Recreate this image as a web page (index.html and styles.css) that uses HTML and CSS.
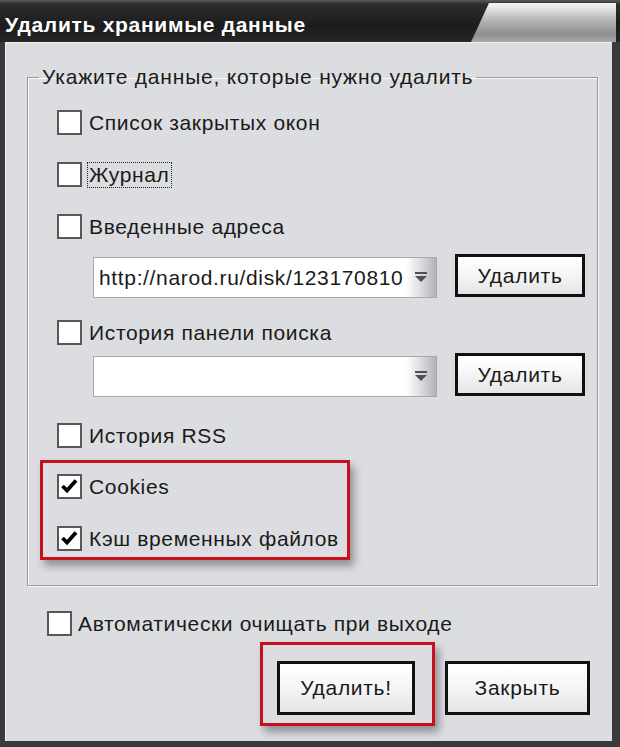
FILE: index.html
```html
<!DOCTYPE html>
<html lang="ru">
<head>
    <meta charset="UTF-8">
    <title>Удалить хранимые данные</title>
    <link rel="stylesheet" href="styles.css">
</head>
<body>
    <div class="window">
        <!-- Title bar -->
        <div class="titlebar">
            <span class="title">Удалить хранимые данные</span>
            <div class="tab"></div>
        </div>

        <div class="client">
            <fieldset class="group">
                <legend>Укажите данные, которые нужно удалить</legend>

                <div class="check"><span class="box"></span><span>Список закрытых окон</span></div>
                <div class="check"><span class="box"></span><span class="focus">Журнал</span></div>
                <div class="check"><span class="box"></span><span>Введенные адреса</span></div>
                <div class="combo-row">
                    <div class="combo">
                        <span class="combo-text">http://narod.ru/disk/123170810</span>
                        <span class="combo-btn">
                            <svg width="12" height="11" viewBox="0 0 12 11"><rect x="0" y="0" width="12" height="2" fill="#505050"/><path d="M0 4 H12 L6 10 Z" fill="#505050"/></svg>
                        </span>
                    </div>
                    <button class="btn">Удалить</button>
                </div>

                <div class="check"><span class="box"></span><span>История панели поиска</span></div>
                <div class="combo-row">
                    <div class="combo">
                        <span class="combo-text"></span>
                        <span class="combo-btn">
                            <svg width="12" height="11" viewBox="0 0 12 11"><rect x="0" y="0" width="12" height="2" fill="#505050"/><path d="M0 4 H12 L6 10 Z" fill="#505050"/></svg>
                        </span>
                    </div>
                    <button class="btn">Удалить</button>
                </div>

                <div class="check"><span class="box"></span><span>История RSS</span></div>

                <div class="mark mark-list">
                    <div class="check">
                        <span class="box"><svg width="21" height="21" viewBox="0 0 21 21"><path d="M3.5 10 L8 14.5 L17 4.5" fill="none" stroke="#000" stroke-width="3.8"/></svg></span>
                        <span>Cookies</span>
                    </div>
                    <div class="check">
                        <span class="box"><svg width="21" height="21" viewBox="0 0 21 21"><path d="M3.5 10 L8 14.5 L17 4.5" fill="none" stroke="#000" stroke-width="3.8"/></svg></span>
                        <span>Кэш временных файлов</span>
                    </div>
                </div>
            </fieldset>

            <div class="check auto"><span class="box"></span><span>Автоматически очищать при выходе</span></div>

            <div class="actions">
                <div class="mark mark-btn">
                    <button class="btn btn-big">Удалить!</button>
                </div>
                <button class="btn btn-big btn-close">Закрыть</button>
            </div>
        </div>
    </div>
</body>
</html>
```

FILE: styles.css
```css
* {
    margin: 0;
    padding: 0;
    box-sizing: border-box;
}

body {
    font-family: 'Liberation Sans', Arial, sans-serif;
    background: #333;
    width: 620px;
    height: 747px;
    overflow: hidden;
}

.window {
    width: 620px;
    height: 747px;
    background: #3a3a3a;
    padding: 0 8px 6px 5px;
    display: flex;
    flex-direction: column;
}

/* Title bar */
.titlebar {
    height: 42px;
    margin: 0 -8px 0 -5px;
    background: linear-gradient(#5a5a5a 0, #2e2e2e 4px, #1c1c1c 60%, #262626 100%);
    display: flex;
    align-items: flex-end;
}

.title {
    flex: 1;
    color: #fff;
    font-size: 21px;
    font-weight: bold;
    padding: 0 0 5px 5px;
    letter-spacing: 0.7px;
}

.tab {
    width: 145px;
    height: 39px;
    margin-right: 4px;
    background: linear-gradient(#f4f4f4 0, #e6e6e6 12%, #b4b4b4 45%, #8e8e8e 80%, #a8a8a8 100%);
    clip-path: polygon(18px 0, 100% 0, 100% 100%, 0 100%);
}

.client {
    flex: 1;
    background: #dcdde0;
    box-shadow: inset 1px 1px 0 #f2f2f2;
    font-size: 21px;
    letter-spacing: 0.65px;
    color: #1a1a1a;
}

/* Group box */
.group {
    margin: 23px 14px 0 22px;
    border: 1px solid #9a9a9a;
    box-shadow: 1px 1px 0 #fafafa, inset 1px 1px 0 #fafafa;
    padding: 21px 0 25px 29px;
}

.group legend {
    margin-left: -18px;
    padding: 0 3px;
    line-height: 24px;
    letter-spacing: 0.8px;
}

.check {
    display: flex;
    align-items: center;
    height: 25px;
    margin-bottom: 27px;
}

.box {
    width: 25px;
    height: 25px;
    background: #fff;
    border: 2px solid #585858;
    margin-right: 7px;
    display: flex;
    align-items: center;
    justify-content: center;
    flex-shrink: 0;
}

.focus {
    outline: 1px dotted #222;
    padding: 0 1px;
    margin-left: -1px;
}

/* Combo boxes */
.combo-row {
    display: flex;
    align-items: flex-start;
    gap: 18px;
    margin: -12px 0 22px 36px;
    height: 44px;
}

.combo-row + .check + .combo-row {
    margin-top: -19px;
    margin-bottom: 26px;
}

.combo {
    width: 344px;
    height: 41px;
    margin-top: 3px;
    background: #fff;
    border: 1px solid #a9a9ab;
    display: flex;
    align-items: center;
}

.combo-text {
    flex: 1;
    padding-left: 5px;
    white-space: nowrap;
    overflow: hidden;
    font-size: 21px;
    letter-spacing: 0.65px;
}

.combo-btn {
    width: 30px;
    height: 100%;
    display: flex;
    align-items: center;
    justify-content: center;
    background: linear-gradient(90deg, #fff 0, #e2e3e6 40%, #b1b3b8 100%);
}

/* Buttons */
.btn {
    font-family: 'Liberation Sans', Arial, sans-serif;
    font-size: 21px;
    letter-spacing: 0.7px;
    color: #1a1a1a;
    width: 130px;
    height: 43px;
    border: 3px solid #111;
    background: linear-gradient(#ffffff 0, #f5f5f5 50%, #e4e4e4 100%);
}

.btn-big {
    width: 138px;
    height: 54px;
}

.btn-close {
    width: 145px;
    margin-top: 19px;
}

/* Red highlight frames */
.mark {
    border: 3px solid #c4111c;
    box-shadow: 4px 6px 8px rgba(0, 0, 0, 0.35);
}

.mark-list {
    width: 310px;
    margin: -15px 0 0 -17px;
    padding: 11px 0 6px 14px;
}

.mark-list .check:last-child {
    margin-bottom: 0;
}

.auto {
    margin: 25px 0 0 42px;
}

.auto .box {
    margin-right: 6px;
}

.actions {
    display: flex;
    justify-content: flex-end;
    align-items: flex-start;
    gap: 10px;
    padding-right: 22px;
    margin-top: 6px;
}

.mark-btn {
    padding: 16px 17px 8px 14px;
}
```
